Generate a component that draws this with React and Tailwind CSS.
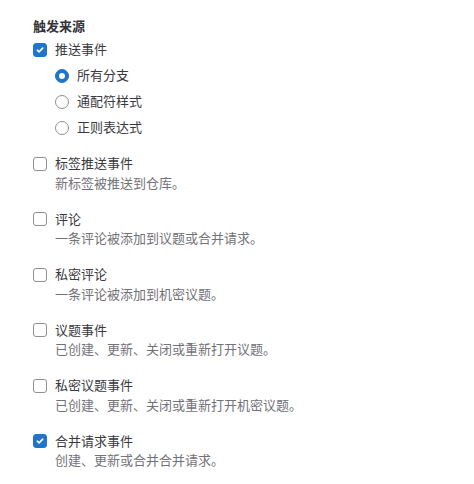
import React, { useState } from 'react';

const items = [
  { id: 'tag', label: '标签推送事件', desc: '新标签被推送到仓库。', checked: false },
  { id: 'note', label: '评论', desc: '一条评论被添加到议题或合并请求。', checked: false },
  { id: 'cnote', label: '私密评论', desc: '一条评论被添加到机密议题。', checked: false },
  { id: 'issue', label: '议题事件', desc: '已创建、更新、关闭或重新打开议题。', checked: false },
  { id: 'cissue', label: '私密议题事件', desc: '已创建、更新、关闭或重新打开机密议题。', checked: false },
  { id: 'mr', label: '合并请求事件', desc: '创建、更新或合并合并请求。', checked: true },
];

const branchOptions = ['所有分支', '通配符样式', '正则表达式'];

const Checkbox = ({ checked }) => (
  <span
    className={`flex h-[14px] w-[14px] shrink-0 items-center justify-center rounded-[3px] border ${
      checked ? 'border-[#1f75cb] bg-[#1f75cb]' : 'border-[#8f8e93] bg-white'
    }`}
  >
    {checked && (
      <svg width="8" height="8" viewBox="0 0 8 8" fill="none">
        <path d="M1.3 4.2 3.1 5.9 6.7 2.1" stroke="white" strokeWidth="1.6" strokeLinecap="round" strokeLinejoin="round" />
      </svg>
    )}
  </span>
);

const Radio = ({ checked }) => (
  <span
    className={`flex h-[14px] w-[14px] shrink-0 items-center justify-center rounded-full border ${
      checked ? 'border-[#1f75cb] bg-[#1f75cb]' : 'border-[#8f8e93] bg-white'
    }`}
  >
    {checked && <span className="h-[6px] w-[6px] rounded-full bg-white" />}
  </span>
);

export default function App() {
  const [state, setState] = useState(() => {
    const s = { push: true };
    items.forEach(i => { s[i.id] = i.checked; });
    return s;
  });
  const [branch, setBranch] = useState(0);

  const toggle = id => setState(prev => ({ ...prev, [id]: !prev[id] }));

  return (
    <div
      className="min-h-[484px] bg-white pl-[33px] pt-[16px] text-[13px] text-[#3a393e]"
      style={{ fontFamily: '"Noto Sans", "Noto Sans CJK SC", sans-serif' }}
    >
      {/* 触发来源 */}
      <div className="font-semibold leading-[20px] text-[#333238]">触发来源</div>

      <label className="mt-[4px] flex h-[20px] cursor-pointer items-center gap-[8px]" onClick={() => toggle('push')}>
        <Checkbox checked={state.push} />
        <span>推送事件</span>
      </label>

      <div className="mt-[6px] flex flex-col gap-[6px] pl-[22px]">
        {branchOptions.map((opt, i) => (
          <label key={opt} className="flex h-[20px] cursor-pointer items-center gap-[8px]" onClick={() => setBranch(i)}>
            <Radio checked={branch === i} />
            <span>{opt}</span>
          </label>
        ))}
      </div>

      <div className="mt-[16px] flex flex-col gap-[16.5px]">
        {items.map(item => (
          <div key={item.id} className="cursor-pointer" onClick={() => toggle(item.id)}>
            <div className="flex h-[19.5px] items-center gap-[8px]">
              <Checkbox checked={state[item.id]} />
              <span>{item.label}</span>
            </div>
            <div className="pl-[22px] leading-[19.5px] text-[#737278]">{item.desc}</div>
          </div>
        ))}
      </div>
    </div>
  );
}
